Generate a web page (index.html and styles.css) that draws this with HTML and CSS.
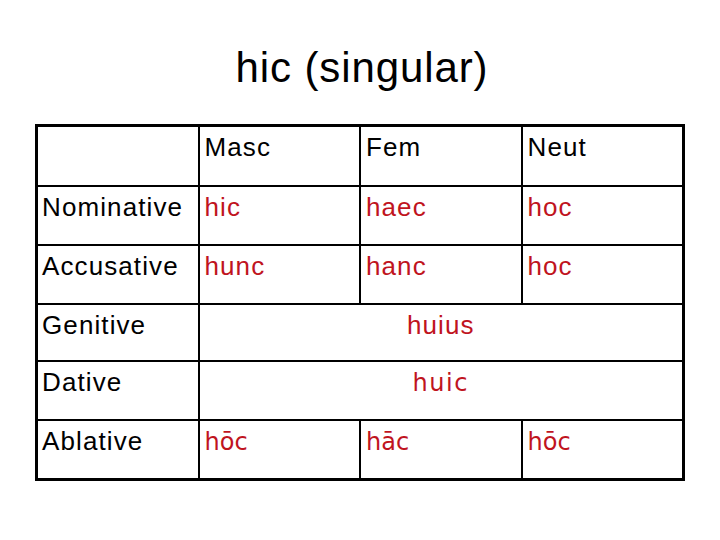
FILE: index.html
```html
<!DOCTYPE html>
<html>
<head>
<meta charset="utf-8">
<link rel="stylesheet" href="styles.css">
</head>
<body>
<h1 class="title">hic (singular)</h1>
<div class="table">
  <div class="cell"></div>
  <div class="cell">Masc</div>
  <div class="cell">Fem</div>
  <div class="cell">Neut</div>

  <div class="cell first">Nominative</div>
  <div class="cell red">hic</div>
  <div class="cell red">haec</div>
  <div class="cell red">hoc</div>

  <div class="cell first">Accusative</div>
  <div class="cell red">hunc</div>
  <div class="cell red">hanc</div>
  <div class="cell red">hoc</div>

  <div class="cell first short">Genitive</div>
  <div class="cell red span3 short">huius</div>

  <div class="cell first">Dative</div>
  <div class="cell red span3 alt spaced">huic</div>

  <div class="cell first">Ablative</div>
  <div class="cell red alt">hōc</div>
  <div class="cell red alt">hāc</div>
  <div class="cell red alt">hōc</div>
</div>
</body>
</html>
```
FILE: styles.css
```css
html, body {
  margin: 0;
  padding: 0;
  background: #ffffff;
}
body {
  width: 720px;
  height: 540px;
  overflow: hidden;
  font-family: "Liberation Sans", Arial, sans-serif;
  color: #000000;
}
.title {
  margin: 47px 0 0 0;
  padding-left: 4px;
  font-weight: normal;
  font-size: 42px;
  line-height: 42px;
  letter-spacing: 0.9px;
  text-align: center;
}
.table {
  margin: 35px 0 0 35px;
  width: 644px;
  border: 3px solid #000000;
  background: #000000;
  display: grid;
  grid-template-columns: repeat(4, 1fr);
  grid-template-rows: 58px 57px 57px 55px 57px 57px;
  gap: 2px;
}
.cell {
  background: #ffffff;
  padding: 7px 0 0 5px;
  font-size: 26px;
  line-height: 26px;
  letter-spacing: 1.1px;
  white-space: nowrap;
}
.cell.first {
  padding-left: 4px;
}
.red {
  color: #c0141e;
}
.span3 {
  grid-column: span 3;
  text-align: center;
  padding-left: 0;
}
.alt {
  font-family: "DejaVu Sans", Verdana, sans-serif;
  font-size: 24px;
  letter-spacing: 0;
  padding-top: 8px;
}
.alt.spaced {
  letter-spacing: 1.5px;
}
.short {
  padding-top: 7px;
}
```
